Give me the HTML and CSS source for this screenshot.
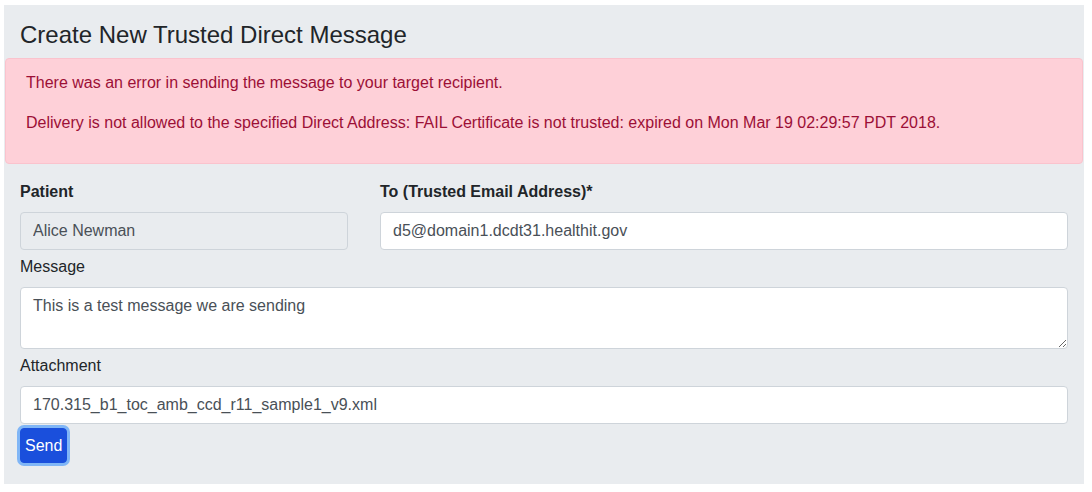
FILE: index.html
```html
<!DOCTYPE html>
<html lang="en">
<head>
<meta charset="utf-8">
<title>Create New Trusted Direct Message</title>
<link rel="stylesheet" href="styles.css">
</head>
<body>
<div class="panel">
  <h4 class="title">Create New Trusted Direct Message</h4>
  <div class="alert">
    <p>There was an error in sending the message to your target recipient.</p>
    <p>Delivery is not allowed to the specified Direct Address: FAIL Certificate is not trusted: expired on Mon Mar 19 02:29:57 PDT 2018.</p>
  </div>
  <form class="form">
    <div class="row">
      <div class="field">
        <label class="label bold">Patient</label>
        <input class="control disabled" type="text" value="Alice Newman" disabled>
      </div>
      <div class="field">
        <label class="label bold">To (Trusted Email Address)*</label>
        <input class="control" type="text" value="d5@domain1.dcdt31.healthit.gov">
      </div>
    </div>
    <div class="field spaced">
      <label class="label">Message</label>
      <textarea class="control area" rows="2">This is a test message we are sending</textarea>
    </div>
    <div class="field spaced">
      <label class="label">Attachment</label>
      <input class="control" type="text" value="170.315_b1_toc_amb_ccd_r11_sample1_v9.xml">
    </div>
    <div class="actions">
      <button type="button" class="btn">Send</button>
    </div>
  </form>
</div>
</body>
</html>
```

FILE: styles.css
```css
html, body {
  margin: 0;
  padding: 0;
  background: #ffffff;
}

body {
  font-family: "Liberation Sans", Arial, sans-serif;
  font-size: 16px;
  line-height: 24px;
  color: #212529;
}

.panel {
  margin: 5px 8px 8px 4px;
  background: #e9ecef;
  padding: 15px 1px 21px;
}

.title {
  margin: 0 15px 9px;
  font-size: 24px;
  font-weight: 400;
  line-height: 29px;
  color: #212529;
}

.alert {
  background: #fed0d8;
  border: 1px solid #fac3cd;
  border-radius: 4px;
  color: #9c0f36;
  padding: 12px 20px;
}

.alert p {
  margin: 0 0 16px;
}

.form {
  margin-top: 16px;
  padding: 0 15px;
}

.row {
  display: grid;
  grid-template-columns: 328px 1fr;
  column-gap: 32px;
}

.field {
  display: flex;
  flex-direction: column;
}

.spaced {
  margin-top: 5px;
}

.label {
  display: block;
  margin-bottom: 8px;
  line-height: 24px;
}

.bold {
  font-weight: 700;
}

.control {
  box-sizing: border-box;
  display: block;
  width: 100%;
  height: 38px;
  margin: 0;
  padding: 6px 12px;
  font-family: "Liberation Sans", Arial, sans-serif;
  font-size: 16px;
  line-height: 24px;
  color: #495057;
  background: #ffffff;
  border: 1px solid #ced4da;
  border-radius: 4px;
  outline: none;
}

.disabled {
  background: #e9ecef;
  color: #495057;
  -webkit-text-fill-color: #495057;
  opacity: 1;
}

.area {
  height: 62px;
  resize: vertical;
}

.actions {
  margin-top: 4px;
  display: flex;
}

.btn {
  box-sizing: border-box;
  margin-left: 0;
  height: 35px;
  padding: 5px 4px;
  font-family: "Liberation Sans", Arial, sans-serif;
  font-size: 16px;
  line-height: 23px;
  color: #ffffff;
  background: #1a4fdc;
  border: 1px solid #1a4fdc;
  border-radius: 4px;
  box-shadow: 0 0 0 3px #80b6f6;
}
```
